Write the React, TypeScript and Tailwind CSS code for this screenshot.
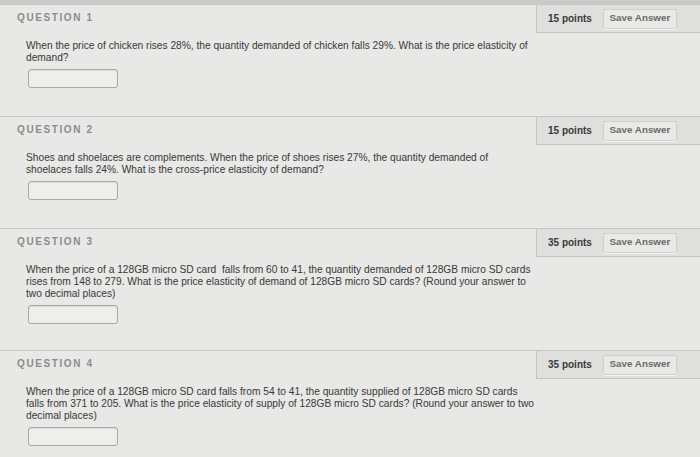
const questions = [
  {
    n: 1,
    points: 15,
    lines: [
      "When the price of chicken rises 28%, the quantity demanded of chicken falls 29%. What is the price elasticity of",
      "demand?",
    ],
  },
  {
    n: 2,
    points: 15,
    lines: [
      "Shoes and shoelaces are complements. When the price of shoes rises 27%, the quantity demanded of",
      "shoelaces falls 24%. What is the cross-price elasticity of demand?",
    ],
  },
  {
    n: 3,
    points: 35,
    lines: [
      "When the price of a 128GB micro SD card  falls from 60 to 41, the quantity demanded of 128GB micro SD cards",
      "rises from 148 to 279. What is the price elasticity of demand of 128GB micro SD cards? (Round your answer to",
      "two decimal places)",
    ],
  },
  {
    n: 4,
    points: 35,
    lines: [
      "When the price of a 128GB micro SD card falls from 54 to 41, the quantity supplied of 128GB micro SD cards",
      "falls from 371 to 205. What is the price elasticity of supply of 128GB micro SD cards? (Round your answer to two",
      "decimal places)",
    ],
  },
];

const Question = ({ n, points, lines }: { n: number; points: number; lines: string[] }) => {
  return (
    <div className={`border-t border-[#c6c6c4] ${lines.length > 2 ? "pb-[26px]" : "pb-[28px]"}`}>
      <div className="flex h-[35px] items-start justify-between">
        <div className="pl-[17px] pt-[5px] text-[10px] font-semibold uppercase tracking-[0.16em] text-[#8c8c8c]">
          Question {n}
        </div>
        <div className="flex h-[28px] w-[164px] items-center border-b border-l border-[#c4c4c2] bg-[#dfdfdd]">
          <span className="ml-[11px] text-[10px] font-bold text-[#3a3a3a]">{points} points</span>
          <button className="ml-[11px] h-[20px] w-[74px] rounded-[2px] border border-[#cfcfcd] bg-[#e9e9e7] text-[9.8px] font-bold text-[#6a6a6a] shadow-[0_1px_0_#f4f4f2]">
            Save Answer
          </button>
        </div>
      </div>
      <div className="pl-[26px] text-[10.2px] leading-[12px] text-[#383838]">
        {lines.map((l, i) => (
          <div key={i} className="whitespace-pre">
            {l}
          </div>
        ))}
      </div>
      <div className="ml-[28px] mt-[5px] h-[19px] w-[90px] rounded-[3px] border border-[#a8a8a6] bg-[#eeeeec] shadow-[inset_0_1px_1px_rgba(0,0,0,0.08)]" />
    </div>
  );
};

export default function App() {
  return (
    <div
      className="h-[457px] w-[700px] overflow-hidden bg-[#e8e8e6]"
      style={{ fontFamily: '"Liberation Sans", Arial, sans-serif' }}
    >
      <div className="h-[4px] bg-[#cacac8]" />
      {questions.map((q) => (
        <Question key={q.n} {...q} />
      ))}
    </div>
  );
}
